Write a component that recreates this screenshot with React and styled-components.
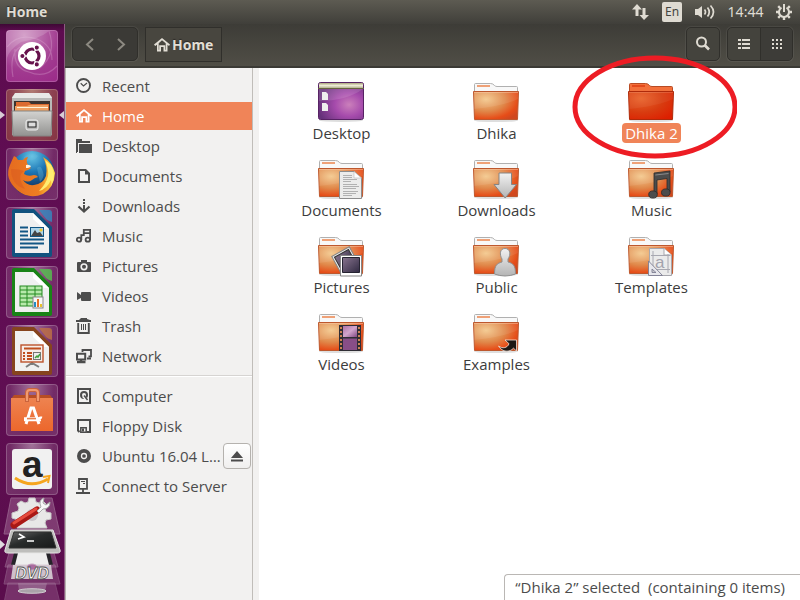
import React from "react";
import styled, { createGlobalStyle, css } from "styled-components";

const GlobalStyle = createGlobalStyle`
  * { box-sizing: border-box; }
  body { margin: 0; overflow: hidden; font: 15px/20px "Open Sans", "Noto Sans", sans-serif; color: #3c3c3c; }
  button { font: inherit; color: inherit; border: 0; padding: 0; background: none; cursor: default; }
  svg { display: block; flex: none; }
`;

const Screen = styled.div`
  height: 100vh;
  display: flex;
  flex-direction: column;
`;

const MenuBar = styled.header`
  height: 24px;
  flex: none;
  display: flex;
  align-items: center;
  justify-content: space-between;
  padding: 0 8px 0 6px;
  background: linear-gradient(#5d5b52, #403f3a);
  color: #dfdbd2;
  font-family: "Noto Sans", sans-serif;
  font-size: 14px;
`;

const AppTitle = styled.span`
  font-weight: 700;
  text-shadow: 0 -1px 1px #2b2a27;
`;

const Indicators = styled.div`
  display: flex;
  align-items: center;
  gap: 13px;
`;

const Keyboard = styled.span`
  width: 20px;
  height: 20px;
  border-radius: 2px;
  background: #dfdbd2;
  color: #45443f;
  font-size: 12px;
  text-align: center;
`;

const Clock = styled.time`
  width: 35px;
  display: flex;
  justify-content: center;
`;

const Desktop = styled.div`
  flex: 1;
  min-height: 0;
  display: flex;
`;

const Launcher = styled.nav`
  width: 65px;
  flex: none;
  display: flex;
  flex-direction: column;
  align-items: center;
  padding: 6px 1px 0 0;
  border-right: 1px solid #8d5a82;
  overflow: hidden;
  background: linear-gradient(#3e0835 0, #5e0c50 7px, #610e54 50%, #5a0d4c);
`;

const Tile = styled.button`
  position: relative;
  width: 52px;
  height: 52px;
  margin-bottom: 7px;
  flex: none;
  border-radius: 4px;
  box-shadow: inset 0 0 0 1px rgba(255, 255, 255, 0.2);
  background: ${(p) => p.$tint || "radial-gradient(ellipse at 50% 0, rgba(255,255,255,.42), rgba(255,255,255,.12) 60%, rgba(255,255,255,.14))"};
  svg { overflow: visible; }
`;

const FoldedTile = styled.button`
  position: relative;
  width: 64px;
  height: ${(p) => p.$height}px;
  flex: none;
  z-index: ${(p) => p.$level};
  svg { overflow: visible; }
`;

const Folded = styled.div`
  margin-top: -5px;
  display: flex;
  flex-direction: column;
`;

const pip = css`
  content: "";
  position: absolute;
  border: 4px solid transparent;
`;

const Running = styled.span`
  &::before { ${pip} left: -6px; top: 22px; border-left: 5px solid #d8ccd5; border-right: 0; }
  &::after { ${pip} right: -6px; top: 22px; border-right: 5px solid #d8ccd5; border-left: 0; }
`;

const Window = styled.section`
  flex: 1;
  min-width: 0;
  display: flex;
  flex-direction: column;
`;

const Toolbar = styled.div`
  height: 44px;
  flex: none;
  display: flex;
  align-items: center;
  padding: 0 7px 2px;
  gap: 7px;
  background: linear-gradient(#3d3c37, #504e46);
  border-bottom: 2px solid #3b3a35;
`;

const ToolGroup = styled.div`
  height: 34px;
  display: flex;
  border: 1px solid #302f2b;
  border-radius: 5px;
  overflow: hidden;
  background: ${(p) => (p.$dark ? "#3b3a36" : "#44433d")};
  box-shadow: 0 0 0 1px rgba(255, 255, 255, 0.06);
`;

const ToolButton = styled.button`
  width: 32px;
  display: grid;
  place-items: center;
  background: ${(p) => (p.$pressed ? "#3d3c38" : "transparent")};
  border-left: ${(p) => (p.$divided ? "1px solid #302f2b" : "0")};
`;

const PathButton = styled.button`
  height: 35px;
  display: flex;
  align-items: center;
  gap: 2px;
  padding: 2px 8px 0;
  margin-right: auto;
  border: 1px solid #302f2b;
  background: #48463f;
  color: #e2ded5;
  font-family: "Noto Sans", sans-serif;
  font-size: 14px;
  font-weight: 700;
  text-shadow: 0 -1px 1px #2b2a27;
`;

const Body = styled.div`
  position: relative;
  flex: 1;
  min-height: 0;
  display: flex;
  background: #fff;
`;

const Sidebar = styled.aside`
  width: 188px;
  flex: none;
  padding-top: 4px;
  border-left: 1px solid #b6b3af;
  border-right: 1px solid #c0bdb9;
  background: #f2f1f0;
`;

const Gutter = styled.div`
  width: 6px;
  flex: none;
  background: #f2f1f0;
`;

const PlaceList = styled.div`
  display: flex;
  flex-direction: column;
  gap: 2px;
`;

const Place = styled.div`
  height: 28px;
  display: flex;
  align-items: center;
  padding: 0 1px 0 10px;
  background: ${(p) => (p.$active ? "#f08458" : "transparent")};
  color: ${(p) => (p.$active ? "#fff" : "#4c4c4c")};
`;

const PlaceLink = styled.a`
  flex: 1;
  min-width: 0;
  display: flex;
  align-items: center;
  gap: 10px;
  color: inherit;
  text-decoration: none;
  white-space: nowrap;
`;

const Eject = styled.button`
  width: 28px;
  height: 26px;
  display: grid;
  place-items: center;
  border: 1px solid #b5b2ae;
  border-radius: 4px;
  background: linear-gradient(#fff, #f0efee);
`;

const Divider = styled.hr`
  height: 2px;
  margin: 5px 0;
  border: 0;
  border-top: 1px solid #d6d4d2;
  background: #fff;
`;

const Files = styled.main`
  flex: 1;
  display: grid;
  grid-template-columns: repeat(auto-fill, 155px);
  grid-auto-rows: 77px;
  align-content: start;
  padding: 8px 5px;
`;

const FileItem = styled.button`
  position: relative;
  display: flex;
  flex-direction: column;
  align-items: center;
  justify-content: flex-start;
`;

const FileLabel = styled.span`
  height: 20px;
  padding: 0 3px;
  border-radius: 4px;
  background: ${(p) => (p.$selected ? "#f08458" : "transparent")};
  color: ${(p) => (p.$selected ? "#fff" : "#3c3c3c")};
`;

const Marker = styled.svg`
  position: absolute;
  left: -5px;
  top: -21px;
  z-index: 2;
  pointer-events: none;
`;

const Status = styled.div`
  position: absolute;
  right: 0;
  bottom: 0;
  height: 26px;
  padding: 2px 15px 0 10px;
  border: 1px solid #bab7b4;
  border-width: 1px 0 0 1px;
  border-radius: 4px 0 0 0;
  background: #fff;
  color: #4c4c4c;
  white-space: pre;
`;

const HOUSE = "M8 1 L0 7.6 L1.2 9 L3 7.7 V14.5 H7 V10 H9.5 V14.5 H13.5 V7.7 L15 9 L16 7.6 Z M8 3.2 L11.7 6.2 V12.7 H11.2 V8.2 H5.2 V12.7 H4.7 V6.2 Z";

const glyphs = {
  recent: (
    <g fill="none" stroke="currentColor">
      <circle cx="7.5" cy="7.5" r="6.5" strokeWidth="1.9" />
      <path d="M4.7 5.3 L7.5 8 L11 5" strokeWidth="1.2" />
    </g>
  ),
  home: <path d={HOUSE} fillRule="evenodd" />,
  desktop: <path d="M0 1 H6 V3 H14 V5 H2 V14 H1 V15 H0 Z M3 6 H16 V15 H3 Z" shapeRendering="crispEdges" />,
  documents: <path d="M2 1 H10 L14 5 V15 H2 Z M4 3 V13 H12 V6.5 H9 V3 Z" fillRule="evenodd" />,
  downloads: (
    <g>
      <path d="M7 1 h2 v2 h-2 z M7 4 h2 v2 h-2 z M7 7 h2 v5 h-2 z" />
      <path d="M2.5 8.5 L8 13.6 L13.5 8.5" fill="none" stroke="currentColor" strokeWidth="2.2" />
    </g>
  ),
  music: (
    <g fill="none" stroke="currentColor" strokeWidth="1.8">
      <ellipse cx="3" cy="11.7" rx="2.2" ry="2" />
      <ellipse cx="11.8" cy="11.7" rx="2.2" ry="2" />
      <path d="M5.3 12 V7.2 H7.8 V1.9 H14.1 V12 M5.3 12 V8 M7.8 5.1 H14" />
    </g>
  ),
  pictures: (
    <g>
      <path d="M5 2 H11 V4 H14 Q15 4 15 5 V13 Q15 14 14 14 H2 Q1 14 1 13 V5 Q1 4 2 4 H5 Z" />
      <circle cx="8" cy="8.8" r="2.8" fill="none" stroke="#f2f1f0" strokeWidth="1.6" />
    </g>
  ),
  videos: <path d="M1 4 L5 7 V5 Q5 4 6 4 H14 Q15 4 15 5 V12 Q15 13 14 13 H6 Q5 13 5 12 V10 L1 12 Z" />,
  trash: (
    <g>
      <path d="M5 0 H11 V1 L14 2 H15 V4 H0 V2 H3 Z" />
      <path d="M2.2 5 V15 H12.8 V5" fill="none" stroke="currentColor" strokeWidth="1.9" />
      <path d="M5.5 6 V12 M7.5 6 V12 M9.5 6 V12" stroke="currentColor" />
    </g>
  ),
  network: (
    <g fill="none" stroke="currentColor" strokeWidth="1.8">
      <path d="M1 5.8 H9.2 V11.5 H1 Z" strokeWidth="2" />
      <path d="M1 14 H9.5 M5 11 V14" strokeWidth="2.4" />
      <path d="M6.5 4 V2 H15 V8.4 H12.5 M11 10.5 H15" />
    </g>
  ),
  computer: (
    <g>
      <path d="M1 0 H15 V16 H1 Z M3 2 V14 H13 V2 Z" fillRule="evenodd" />
      <circle cx="8" cy="7" r="3" fill="none" stroke="currentColor" strokeWidth="2" />
      <path d="M7 8 L12 13" stroke="#f2f1f0" strokeWidth="2.5" />
      <path d="M8 7.5 L11.5 12" stroke="currentColor" strokeWidth="1.4" />
    </g>
  ),
  floppy: (
    <g fill="none" stroke="currentColor">
      <path d="M3.5 14 L2 12.5 V2 H14 V14 H11" strokeWidth="2" />
      <path d="M4.8 9.8 H10.2 V14.2 H4.8 Z" strokeWidth="1.5" />
      <path d="M6 12 H8" strokeWidth="3" />
    </g>
  ),
  disc: (
    <g>
      <circle cx="8" cy="8" r="7" />
      <circle cx="8" cy="8" r="2.5" fill="none" stroke="#f2f1f0" strokeWidth="1.3" />
    </g>
  ),
  server: (
    <g fill="none" stroke="currentColor" strokeWidth="1.8">
      <path d="M3 1 H11 V10.8 H3 Z M7 11 V15 M0 15 H14" />
      <path d="M5 3.5 H9 M7 5.5 H9" strokeWidth="1" />
    </g>
  ),
};

function Glyph({ name, size = 16 }) {
  return <svg width={size} height={size} viewBox="0 0 16 16" fill="currentColor" aria-hidden="true">{glyphs[name]}</svg>;
}

const overlays = {
  documents: (
    <g>
      <path d="M21.5 18.5 H36 L43.5 25 V45.5 H21.5 Z" fill="#ececeb" stroke="#8d8d8d" />
      <path d="M36 18.5 V25 H43.5 Z" fill="#fff" stroke="#bbb" strokeWidth=".6" />
      <path d="M25 22.5 h9 M25 24.5 h9 M25 26.5 h14 M25 28.5 h8 M25 31.5 h14 M25 33.5 h16 M25 35.5 h13 M25 38.5 h15 M25 40.5 h13 M25 42.5 h9" stroke="#aaa" strokeWidth=".9" />
    </g>
  ),
  downloads: <path d="M26 20 H38.5 V31.5 H43.5 L32.2 45 L21 31.5 H26 Z" fill="url(#steel)" stroke="#858585" />,
  music: (
    <g fill="#4c4c4c" stroke="#2b2b2b" strokeWidth=".8">
      <path d="M26 20 L42 18 V39 H39 V25.5 L29 27 V41 H26 Z" />
      <ellipse cx="25" cy="41.5" rx="4.3" ry="3.6" />
      <ellipse cx="37.8" cy="39.5" rx="4.3" ry="3.6" />
      <path d="M27.3 22 L40.5 20.5" stroke="#999" />
    </g>
  ),
  pictures: (
    <g stroke="#858585">
      <g transform="rotate(-29 26 30)"><path d="M17 21 H37 V40 H17 Z" fill="#eee" /><path d="M19 23 H35 V37 H19 Z" fill="url(#photo)" stroke="#333" /></g>
      <path d="M22.5 25.5 H43.5 V46 H22.5 Z" fill="#fff" />
      <path d="M24.5 27.5 H41.5 V42.5 H24.5 Z" fill="url(#photo)" stroke="#252331" />
    </g>
  ),
  public: (
    <path d="M32 18.5 C26.5 18.5 26.5 25 29 29 V32 C24 33.5 21.5 35 21.5 44 Q32 48 42.5 44 C42.5 35 40 33.5 35 32 V29 C38 25 37.5 18.5 32 18.5 Z" fill="url(#steel)" stroke="#8f8f8f" />
  ),
  templates: (
    <g>
      <path d="M21.5 18.5 H36 L43.5 25 V45.5 H21.5 Z" fill="#ebebeb" stroke="#a7a7ad" />
      <path d="M36 18.5 V25 H43.5" fill="#fff" stroke="#a7a7ad" />
      <path d="M25 21 V42 M40 24 V43 M23 25.5 H42 M26 39.5 H42" stroke="#a8a8b1" fill="none" />
      <text x="27" y="38" fontFamily="Liberation Sans, sans-serif" fontSize="17" fill="#a2a2ad">a</text>
      <path d="M20.5 31 V45.5 H34.5 Z M24 39 V42.5 H28 Z" fillRule="evenodd" fill="#e7e7ec" stroke="#7d7d92" strokeWidth=".9" />
    </g>
  ),
  videos: (
    <g>
      <path d="M21 18 H43 V44 H21 Z" fill="#2f2d35" />
      <path d="M25 19 H39 V30 H25 Z" fill="url(#film)" />
      <path d="M25 31.5 H39 V43 H25 Z" fill="#884e88" />
      <path d="M23 20 V43 M41 20 V43" stroke="#dc8a58" strokeWidth="1.8" strokeDasharray="2 2" />
    </g>
  ),
  examples: (
    <path d="M32 33 H43.5 V44 L40.5 41.2 C36.5 45.5 29.5 45.5 25.5 39 C29.5 42 34.5 41 36 36.7 Z" fill="#1c1714" stroke="#f5e4da" strokeWidth=".8" />
  ),
};

function FolderIcon({ kind, selected }) {
  if (kind === "desktop") {
    return (
      <svg width="47" height="47" aria-hidden="true">
        <ellipse cx="23" cy="44.5" rx="22" ry="1.5" fill="#ddd" />
        <rect x=".5" y="6.5" width="45" height="37" rx="2" fill="url(#desk)" stroke="#572264" />
        <path d="M1 25 Q28 25 45 13 V12 H1 Z" fill="#fff" opacity=".12" />
        <path d="M1 8 Q1 7 2 7 H44 Q45 7 45 8 V12 H1 Z" fill="url(#bar)" />
        <path d="M0 12.5 H46" stroke="#67653e" />
        <path d="M4 16 H8 L10 18 V24 H4 Z M4 27 H8 L10 29 V35 H4 Z" fill="#eee" />
      </svg>
    );
  }
  return (
    <svg width="47" height="47" aria-hidden="true">
      <ellipse cx="23" cy="44.5" rx="22" ry="1.6" fill="#dedede" />
      <path d="M1.5 18 V8.5 Q1.5 7.5 2.5 7.5 H17.5 Q20 7.5 21.5 9.5 Q22.5 10.5 24 10.5 H43.5 Q44.5 10.5 44.5 11.5 V18" fill={selected ? "#f3703b" : "#f8f8f8"} stroke={selected ? "#b84b23" : "#b0b0b0"} />
      <path d="M4 10 H17" stroke={selected ? "#e44a1c" : "#efa177"} strokeWidth="2" />
      <path d="M.5 15.5 H45.5 L44.5 43.5 H1.5 Z" fill={selected ? "url(#redFolder)" : "url(#folder)"} stroke={selected ? "#ae2a0a" : "#bd582e"} />
      <path d="M1 16.5 H45" stroke="#ffd0ae" opacity={selected ? ".2" : ".45"} />
      <path d="M1 16 H45 V23 Q30 30 1 33 Z" fill="#fff" opacity={selected ? ".05" : ".08"} />
      {overlays[kind]}
    </svg>
  );
}

const PaintStore = styled.svg`
  position: absolute;
`;

function SharedPaints() {
  return (
    <PaintStore width="0" height="0" aria-hidden="true">
      <defs>
        <radialGradient id="folder" cx=".28" cy=".28" r=".85"><stop stopColor="#f3c88c" /><stop offset=".5" stopColor="#e0884a" /><stop offset=".83" stopColor="#e64d18" /><stop offset="1" stopColor="#d0481e" /></radialGradient>
        <radialGradient id="redFolder" cx=".28" cy=".25" r=".9"><stop stopColor="#e8632b" /><stop offset=".55" stopColor="#d83c10" /><stop offset="1" stopColor="#dd1f00" /></radialGradient>
        <radialGradient id="desk" cx=".68" cy=".6" r=".7"><stop stopColor="#cb80bb" /><stop offset=".45" stopColor="#a64bac" /><stop offset="1" stopColor="#65317a" /></radialGradient>
        <linearGradient id="bar" x2="0" y2="1"><stop stopColor="#aaa77d" /><stop offset=".5" stopColor="#eeecd5" /><stop offset="1" stopColor="#b4b192" /></linearGradient>
        <linearGradient id="steel" x2="0" y2="1"><stop stopColor="#f2f2f2" /><stop offset="1" stopColor="#b4b4b4" /></linearGradient>
        <linearGradient id="photo" x2="1" y2="1"><stop stopColor="#88748e" /><stop offset="1" stopColor="#302a42" /></linearGradient>
        <linearGradient id="film" x2="1" y2="1"><stop stopColor="#ad72a8" /><stop offset=".5" stopColor="#d2a5cd" /><stop offset="1" stopColor="#824a83" /></linearGradient>
        <linearGradient id="metal" x2="0" y2="1"><stop stopColor="#d3d3d1" /><stop offset="1" stopColor="#929290" /></linearGradient>
        <radialGradient id="globe" cx=".5" cy=".12" r=".7"><stop stopColor="#68c6e6" /><stop offset=".5" stopColor="#1c76b5" /><stop offset="1" stopColor="#133562" /></radialGradient>
        <linearGradient id="fox" x2="1" y2="0"><stop stopColor="#e56b20" /><stop offset=".65" stopColor="#ee7e21" /><stop offset="1" stopColor="#ffdb43" /></linearGradient>
        <linearGradient id="bag" x2="0" y2="1"><stop stopColor="#ee8350" /><stop offset="1" stopColor="#ec672c" /></linearGradient>
        <linearGradient id="screen" x2="1" y2="1"><stop stopColor="#666" /><stop offset=".45" stopColor="#292c2c" /><stop offset="1" stopColor="#171919" /></linearGradient>
      </defs>
    </PaintStore>
  );
}

function OfficePage({ color, light, children }) {
  return (
    <>
      <path d="M6 4 Q6 2 8 2 H28 L46 20 V48 Q46 50 44 50 H8 Q6 50 6 48 Z" fill={color} />
      <path d="M9 6 H27 L43 22 V46 H9 Z" fill="#f0f0f0" />
      <path d="M27 6 L43 22 H38 L27 12 Z" fill="#fff" />
      <path d="M33 3 H43 Q46 3 46 6 V15 Q42 14 40 12 Z" fill={light} opacity=".8" />
      {children}
    </>
  );
}

const appDrawings = {
  Dash: (
    <>
      <g fill="none" stroke="#e5b5db" opacity=".3" strokeWidth="1.2">
        <path d="M43 1 Q51 24 34 38 M9 19 Q7 38 23 42 Q39 49 51 36 M1 17 Q12 3 31 9 Q46 15 46 30 M7 47 Q3 24 14 17" />
      </g>
      <path d="M1 1 H43 Q33 9 15 12 Q3 20 1 28 Z" fill="#fff" opacity=".16" />
      <circle cx="26" cy="26" r="14" fill="#fff" />
      <circle cx="26" cy="26" r="7" fill="none" stroke="#66114c" strokeWidth="3.2" />
      <path d="M26 26 L12 26 M26 26 L33 13.9 M26 26 L33 38.1" stroke="#fff" strokeWidth="1.4" />
      <g fill="#66114c" stroke="#fff" strokeWidth="1.1"><circle cx="16.4" cy="26" r="2.6" /><circle cx="30.8" cy="17.6" r="2.6" /><circle cx="30.8" cy="34.4" r="2.6" /></g>
    </>
  ),
  Files: (
    <>
      <path d="M6 8 L10 4 H42 L46 8 V46 H6 Z" fill="#b9b9b7" />
      <path d="M6 9 L9 4 H43 L46 9 Z" fill="#e9e9e7" />
      <path d="M8 12 H44 V23 H8 Z" fill="#3b332f" />
      <path d="M10 13 H23 L25 15 H43 V22 H10 Z" fill="#dc6b31" />
      <path d="M9 17 H21 L23 16 H42 V23 H9 Z" fill="#f0a163" />
      <path d="M11 18.5 H42" stroke="#fff3d9" />
      <path d="M6 22 H46 L45 47 H7 Z" fill="url(#metal)" stroke="#858583" />
      <rect x="20" y="31" width="12" height="10" rx="2" fill="#b8b8b7" stroke="#eee" />
      <rect x="22" y="33" width="8" height="5" fill="#ddd" stroke="#222" />
    </>
  ),
  Firefox: (
    <>
      <circle cx="26" cy="25.5" r="22.5" fill="url(#globe)" />
      <path d="M18 9 Q26 3 32 8 Q29 13 23 12 Q20 15 17 14 Z M31 20 Q35 16 37 24 Q39 29 34 34 Z" fill="#69b9da" opacity=".35" />
      <path d="M8 8 Q11 9 12 12 L17 12 Q19 9 22 9 Q20 12 21 15 Q22 18 25 20 Q23 22 19 23 L18 26 Q22 29 28 27 Q31 27 32 29 Q28 30 26 32 Q22 35 17 32 Q21 38 28 37 Q37 36 40 28 Q42 19 37 9 Q46 14 49 25 Q48 40 37 46 Q23 52 11 42 Q-2 30 4 17 Q6 12 8 8 Z" fill="url(#fox)" />
      <path d="M39 12 L45 17 Q51 27 45 38 Q46 35 45 32 Q41 41 33 43 Q40 36 42 28 Q43 22 39 12 Z" fill="#ffed71" />
      <path d="M5 21 Q5 37 19 41 Q10 28 18 23 Q13 21 5 21" fill="#d95b20" opacity=".55" />
      <path d="M20 17 Q22 16 25 18 Q24 20 20 20 Z" fill="#fff2df" />
    </>
  ),
  Writer: (
    <OfficePage color="#11527f" light="#338ac1">
      <path d="M14 20.5 H22 M14 24.5 H22 M14 28.5 H22 M14 32.5 H38 M14 36.5 H38 M14 40.5 H32" stroke="#125685" strokeWidth="2" />
      <rect x="24.5" y="20.5" width="13" height="9" fill="#afd5e8" stroke="#125685" /><circle cx="35" cy="23" r="1.6" fill="#f0c72d" /><path d="M25 29 L29 23 L31 26 L34 25 L37 29 Z" fill="#444" />
    </OfficePage>
  ),
  Calc: (
    <OfficePage color="#198317" light="#54c44d">
      <rect x="14" y="20" width="22" height="20" fill="#b7e9ab" stroke="#248a20" /><path d="M14 24 H36 M14 28 H36 M14 32 H36 M14 36 H36 M21 20 V40 M29 20 V40" stroke="#248a20" /><rect x="27" y="31" width="10" height="11" fill="#f7f7f7" stroke="#858585" /><path d="M29 36 V41" stroke="#258bc4" strokeWidth="2" /><path d="M32 33 V41" stroke="#e77027" strokeWidth="2" /><path d="M35 38 V41" stroke="#e8c12a" strokeWidth="2" />
    </OfficePage>
  ),
  Impress: (
    <OfficePage color="#86441e" light="#bf7243">
      <path d="M26 36 V40 M20 42 L26 38 L33 42" fill="none" stroke="#7c7c7c" strokeWidth="2" /><rect x="15" y="20" width="22" height="17" fill="#f6eee9" stroke="#bc532c" strokeWidth="1.4" /><path d="M18 23.5 H35 M17 28 H19 M21 28 H26 M17 31 H19 M21 31 H26 M17 34 H19 M21 34 H26" stroke="#c04f1f" strokeWidth="1.8" /><rect x="27.5" y="27.5" width="7" height="7" fill="#eee" stroke="#777" /><path d="M29 33 L31 31 L32 32 L34 29" fill="none" stroke="#40a13e" strokeWidth="1.5" />
    </OfficePage>
  ),
  Software: (
    <>
      <path d="M5 15 L8 11 H44 L47 15 Z" fill="#b64d24" /><path d="M5 14 H47 V47 H5 Z" fill="url(#bag)" /><path d="M21 18 V9 Q21 6 24 6 H29 Q32 6 32 9 V18" fill="none" stroke="#ca633c" strokeWidth="4" /><path d="M21 17 V9 Q21 6 24 6 H29 Q32 6 32 9 V17" fill="none" stroke="#f29b70" strokeWidth="2" />
      <path d="M20 40 L25 24 H27.5 L33 40" fill="none" stroke="#fff" strokeWidth="3" /><path d="M18 34.5 H32 Q35 34.5 35 32.5 M18 36 H35" fill="none" stroke="#fff" strokeWidth="2.6" /><path d="M21 34.6 H30" stroke="#e78352" strokeWidth="1.6" />
    </>
  ),
  Amazon: (
    <>
      <rect x="6" y="6" width="40" height="40" rx="3" fill="#f1f1f1" />
      <text x="16" y="34" fontFamily="Liberation Sans, sans-serif" fontWeight="700" fontSize="37" fill="#222">a</text>
      <path d="M9 35 Q25 46 42 36" fill="none" stroke="#f5a51e" strokeWidth="2.8" /><path d="M37 34 L43.5 33 L42 40" fill="none" stroke="#f5a51e" strokeWidth="2" />
    </>
  ),
};

const tints = {
  Dash: "radial-gradient(circle at 35% 10%, #cd90c0, #a13b90 60%, #9b2a88)",
  Files: "radial-gradient(ellipse at 50% 0, #b17b72, #8d4252 55%, #853442)",
};

function AppTile({ name }) {
  return (
    <Tile aria-label={name} $tint={tints[name]}>
      <svg width="52" height="52" viewBox="0 0 52 52" aria-hidden="true">{appDrawings[name]}</svg>
      {name === "Files" && <Running />}
    </Tile>
  );
}

function FoldedApps() {
  return (
    <Folded>
      <FoldedTile aria-label="System Settings" $height={33} $level={1}>
        <svg width="64" height="33" aria-hidden="true">
          <path d="M11 1 H52 L60 37 H4 Z" fill="#a26895" opacity=".5" stroke="#c6a4be" />
          <path d="M29 1 H35 L36 5 L39 6 L43 4 L47 8 L45 12 L46 15 L51 16 V22 L46 23 L45 26 L47 31 H17 L19 26 L18 23 L12 21 V16 L18 14 L19 11 L17 7 L21 4 L25 6 L28 5 Z" fill="#e8e8e7" stroke="#c9c9c8" />
          <circle cx="32" cy="18" r="6" fill="#c9c4c9" />
          <path d="M14 28 L37 13" stroke="#a91916" strokeWidth="7" strokeLinecap="round" /><path d="M14 26 L36 12" stroke="#e54b3d" strokeWidth="3" strokeLinecap="round" />
          <path d="M37 14 L41 10 Q38 3 44 1 L43 6 L46 8 L50 5 Q50 12 43 12 L39 16 Z" stroke="#aaa" fill="#f8f8f8" />
        </svg>
      </FoldedTile>
      <FoldedTile aria-label="Terminal" $height={23} $level={5}>
        <svg width="64" height="23" aria-hidden="true">
          <path d="M11 0 H53 L60 20 Q61 23 57 23 H8 Q4 23 5 20 Z" fill="#bebebc" stroke="#e6e6e5" />
          <path d="M14 2 H51 L56 18 H9 Z" fill="url(#screen)" stroke="#333" />
          <path d="M19 4 L24 7 L18 9 M27 11 H34" fill="none" stroke="#fff" strokeWidth="1.6" />
          <path d="M0 10 L5 14.5 L0 19 Z" fill="#e0dbe0" />
        </svg>
      </FoldedTile>
      <FoldedTile aria-label="Floppy Disk" $height={12} $level={3}>
        <svg width="64" height="12" aria-hidden="true">
          <path d="M9 0 H54 L58 14 H5 Z" fill="#a26895" opacity=".45" stroke="#bfa0b9" />
          <path d="M14 0 H50 L53 12 H11 Z" fill="#252329" /><path d="M18 0 H46 L49 12 H15 Z" fill="#eee" />
        </svg>
      </FoldedTile>
      <FoldedTile aria-label="Ubuntu 16.04 DVD" $height={18} $level={4}>
        <svg width="64" height="18" aria-hidden="true">
          <path d="M8 0 H55 L60 19 H4 Z" fill="#a26895" opacity=".4" stroke="#bfa0b9" />
          <path d="M13 0 H51 L53 14 H11 Z" fill="#e5e5e4" opacity=".8" />
          <ellipse cx="32" cy="2" rx="5" ry="3" fill="#aa6c9f" stroke="#c5a4c0" />
          <text x="15" y="14" fontFamily="Liberation Sans, sans-serif" fontSize="16" fontWeight="700" fontStyle="italic" fill="#fff" stroke="#555" strokeWidth=".8">DVD</text>
        </svg>
      </FoldedTile>
      <FoldedTile aria-label="Trash" $height={20} $level={1}>
        <svg width="64" height="20" aria-hidden="true">
          <path d="M8 0 H55 L60 20 H4 Z" fill="#aa739f" opacity=".35" stroke="#bfa0b9" />
          <path d="M18 0 H47 L45 8 H19 Z" fill="#bba3b6" opacity=".4" /><ellipse cx="32" cy="8" rx="14" ry="2.3" fill="#aaa2a9" stroke="#d0cacf" />
        </svg>
      </FoldedTile>
    </Folded>
  );
}

const places = [["recent", "Recent"], ["home", "Home"], ["desktop", "Desktop"], ["documents", "Documents"], ["downloads", "Downloads"], ["music", "Music"], ["pictures", "Pictures"], ["videos", "Videos"], ["trash", "Trash"], ["network", "Network"]];
const devices = [["computer", "Computer"], ["floppy", "Floppy Disk"], ["disc", "Ubuntu 16.04 L…"], ["server", "Connect to Server"]];
const files = ["Desktop", "Dhika", "Dhika 2", "Documents", "Downloads", "Music", "Pictures", "Public", "Templates", "Videos", "Examples"];

function PlaceRow({ icon, label }) {
  return (
    <Place $active={icon === "home"}>
      <PlaceLink href="#"><Glyph name={icon} />{label}</PlaceLink>
      {icon === "disc" && (
        <Eject aria-label="Eject">
          <svg width="12" height="11" aria-hidden="true"><path d="M6 0 L12 7 H0 Z M0 8.5 H12 V10.5 H0 Z" fill="#4c4c4c" /></svg>
        </Eject>
      )}
    </Place>
  );
}

export default function App() {
  return (
    <Screen>
      <GlobalStyle />
      <SharedPaints />
      <MenuBar>
        <AppTitle>Home</AppTitle>
        <Indicators>
          <svg width="17" height="16" fill="#dfdbd2" aria-label="Network">
            <path d="M5 0 L10 5.5 H6.5 V12 H3.5 V5.5 H0 Z M12 16 L7.5 11 H10.5 V4 H13.5 V11 H17 Z" />
          </svg>
          <Keyboard>En</Keyboard>
          <svg width="20" height="16" aria-label="Volume">
            <path d="M0 5 H3 L7 2 V14 L3 11 H0 Z" fill="#dfdbd2" />
            <path d="M9.5 5.5 Q11.5 8 9.5 10.5 M12.5 3.5 Q16 8 12.5 12.5 M15.5 1.5 Q21.5 8 15.5 14.5" fill="none" stroke="#dfdbd2" strokeWidth="1.7" />
          </svg>
          <Clock>14:44</Clock>
          <svg width="16" height="16" aria-label="System">
            <g fill="none" stroke="#dfdbd2">
              <path d="M5.5 3.7 A5 5 0 1 0 10.5 3.7" strokeWidth="2" /><path d="M8 0 V8" strokeWidth="2" />
              <path d="M2.2 2.2 L4 4 M13.8 2.2 L12 4 M0 8 H3 M13 8 H16 M2.2 13.8 L4 12 M13.8 13.8 L12 12 M8 13 V16" strokeWidth="2.4" />
            </g>
          </svg>
        </Indicators>
      </MenuBar>
      <Desktop>
        <Launcher aria-label="Launcher">
          {Object.keys(appDrawings).map((name) => <AppTile key={name} name={name} />)}
          <FoldedApps />
        </Launcher>
        <Window>
          <Toolbar>
            <ToolGroup $dark>
              <ToolButton aria-label="Back"><svg width="9" height="13"><path d="M8 1 L2 6.5 L8 12" fill="none" stroke="#8c8981" strokeWidth="2" /></svg></ToolButton>
              <ToolButton aria-label="Forward"><svg width="9" height="13"><path d="M1 1 L7 6.5 L1 12" fill="none" stroke="#8c8981" strokeWidth="2" /></svg></ToolButton>
            </ToolGroup>
            <PathButton><Glyph name="home" />Home</PathButton>
            <ToolGroup>
              <ToolButton aria-label="Search">
                <svg width="16" height="16"><circle cx="6.5" cy="6" r="4.5" fill="none" stroke="#dfdbd2" strokeWidth="2" /><path d="M9.5 9 L14 13.5" stroke="#dfdbd2" strokeWidth="2.6" /></svg>
              </ToolButton>
            </ToolGroup>
            <ToolGroup>
              <ToolButton aria-label="List view">
                <svg width="12" height="12"><path d="M0 2 H3 M4 2 H12 M0 6 H3 M4 6 H12 M0 10 H3 M4 10 H12" stroke="#dfdbd2" strokeWidth="2" /></svg>
              </ToolButton>
              <ToolButton aria-label="Icon view" $pressed $divided>
                <svg width="12" height="12"><path d="M1 2 H11 M1 6 H11 M1 10 H11" stroke="#dfdbd2" strokeWidth="2" strokeDasharray="2 2" /></svg>
              </ToolButton>
            </ToolGroup>
          </Toolbar>
          <Body>
            <Sidebar>
              <PlaceList>{places.map(([icon, label]) => <PlaceRow key={icon} icon={icon} label={label} />)}</PlaceList>
              <Divider />
              <PlaceList>{devices.map(([icon, label]) => <PlaceRow key={icon} icon={icon} label={label} />)}</PlaceList>
            </Sidebar>
            <Gutter />
            <Files>
              {files.map((name) => {
                const selected = name === "Dhika 2";
                return (
                  <FileItem key={name}>
                    <FolderIcon kind={name.toLowerCase()} selected={selected} />
                    <FileLabel $selected={selected}>{name}</FileLabel>
                    {selected && (
                      <Marker width="168" height="104" aria-hidden="true"><ellipse cx="86" cy="52" rx="80" ry="49" fill="none" stroke="#ed1c24" strokeWidth="5" /></Marker>
                    )}
                  </FileItem>
                );
              })}
            </Files>
            <Status>“Dhika 2” selected  (containing 0 items)</Status>
          </Body>
        </Window>
      </Desktop>
    </Screen>
  );
}
